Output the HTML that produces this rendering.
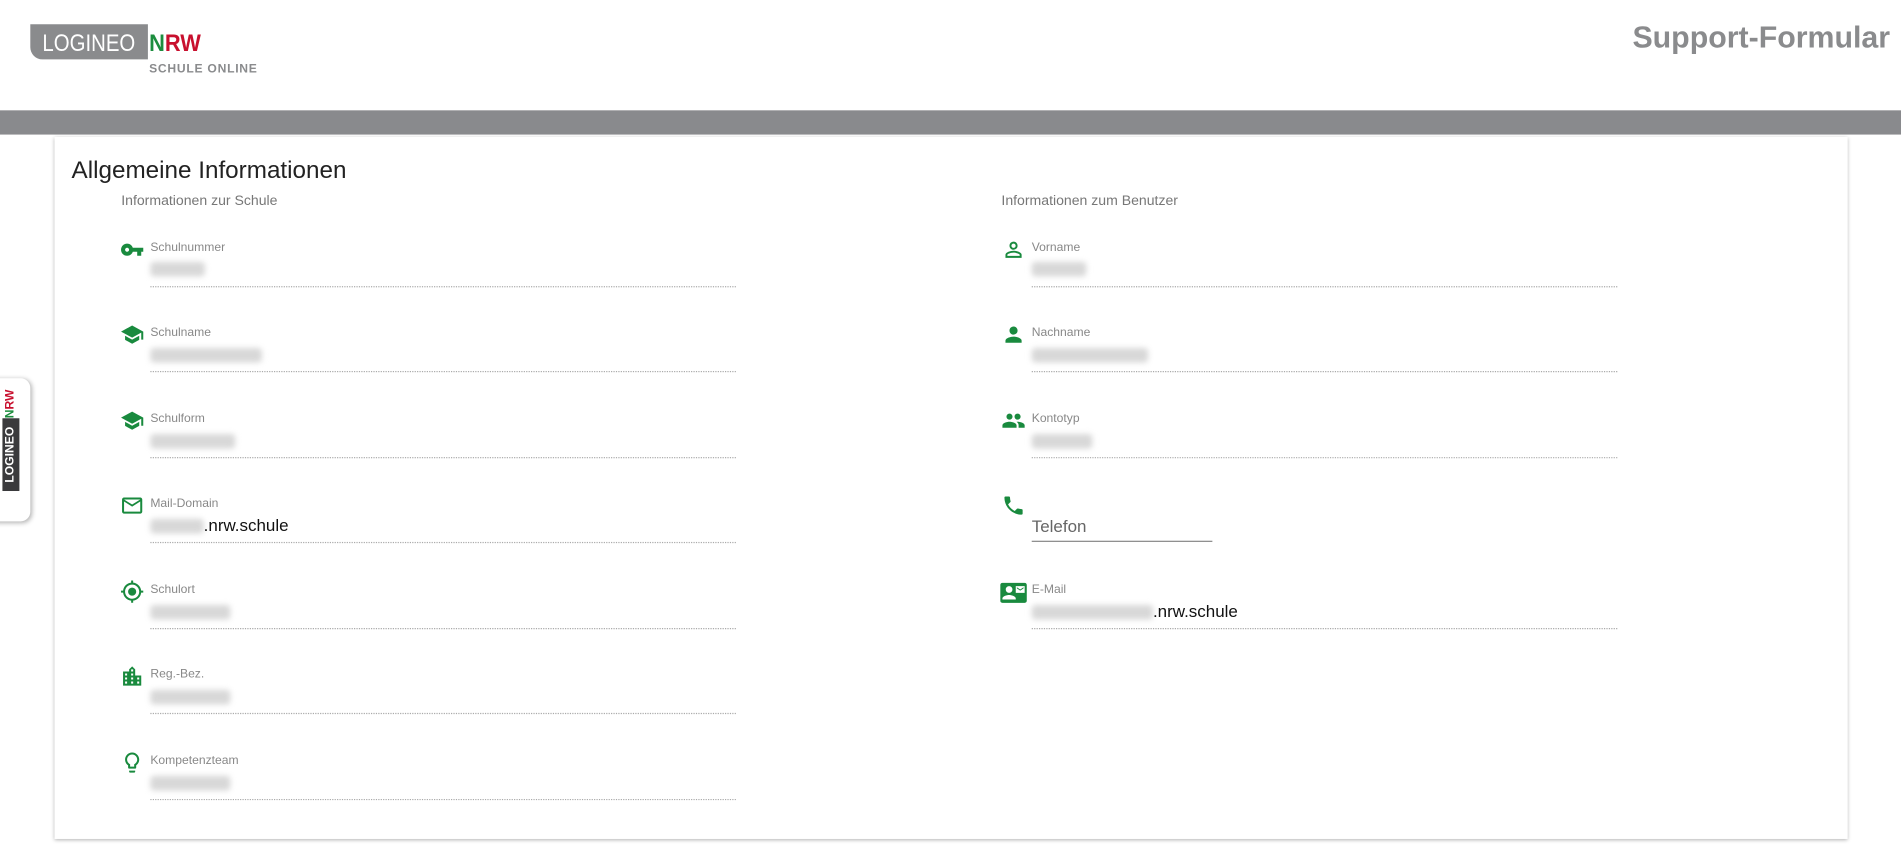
<!DOCTYPE html>
<html><head><meta charset="utf-8"><style>
*{margin:0;padding:0;box-sizing:border-box}
body{width:1901px;height:843px;background:#fff;font-family:"Liberation Sans",Arial,sans-serif;position:relative;overflow:hidden}
#w{position:absolute;left:0;top:0;width:1568px;height:696px;transform:scale(1.21237);transform-origin:0 0}
.a{position:absolute}
.lbl{font-size:10px;color:#888}
.val{filter:blur(2.5px);background:#d8d8d8;height:12px;border-radius:3px}
.line{height:0;border-top:1px dotted #aaa}
svg.i{position:absolute;width:20px;height:20px;fill:#198a3e}
</style></head><body><div id="w">
<!-- logo -->
<div class="a" style="left:25px;top:20px;width:97px;height:29px;background:#8a8b8d;border-bottom-left-radius:10px"></div>
<div class="a" style="left:35px;top:25px;font-size:20px;color:#fff;line-height:22px;transform:scaleX(.84);transform-origin:0 0">LOGINEO</div>
<div class="a" style="left:123px;top:25px;font-size:20px;font-weight:bold;line-height:22px;transform:scaleX(.9);transform-origin:0 0"><span style="color:#1c8d3e">N</span><span style="color:#c8102e">RW</span></div>
<div class="a" style="left:123px;top:52px;font-size:10px;font-weight:bold;color:#8a8b8d;letter-spacing:.6px">SCHULE ONLINE</div>
<div class="a" style="right:9px;top:17px;font-size:25px;font-weight:bold;color:#8a8b8d">Support-Formular</div>
<div class="a" style="left:0;top:91px;width:1568px;height:20px;background:#898a8d"></div>
<!-- card -->
<div class="a" style="left:45px;top:113px;width:1479px;height:579px;background:#fff;box-shadow:0 1px 3px rgba(0,0,0,.3)"></div>
<div class="a" style="left:59px;top:130px;font-size:20px;color:#222">Allgemeine Informationen</div>
<div class="a" style="left:100px;top:159px;font-size:11.6px;color:#777">Informationen zur Schule</div>
<div class="a" style="left:826px;top:159px;font-size:11.6px;color:#777">Informationen zum Benutzer</div>
<!-- side tab -->
<div class="a" style="left:-5px;top:312px;width:30px;height:118px;background:#fff;border-radius:0 8px 8px 0;box-shadow:1px 1px 4px rgba(0,0,0,.3)"></div>
<div class="a" style="left:2px;top:345px;width:14px;height:60px;background:#3a3a3c"></div>
<div class="a" style="left:3px;top:405px;transform-origin:0 0;transform:rotate(-90deg);font-size:10px;font-weight:bold;line-height:12px;white-space:nowrap;width:80px"><span style="color:#fff;display:inline-block;width:60px;text-align:center">LOGINEO</span><span style="color:#1c8d3e">N</span><span style="color:#c8102e">RW</span></div>

<!-- left column -->
<svg class="i" style="left:99px;top:196px" viewBox="0 0 24 24"><path d="M12.65 10C11.83 7.67 9.61 6 7 6c-3.31 0-6 2.69-6 6s2.69 6 6 6c2.61 0 4.83-1.67 5.65-4H17v4h4v-4h2v-4H12.65zM7 14c-1.1 0-2-.9-2-2s.9-2 2-2 2 .9 2 2-.9 2-2 2z"/></svg>
<div class="a lbl" style="left:124px;top:199px">Schulnummer</div>
<div class="a val" style="left:124px;top:216px;width:45px"></div>
<div class="a line" style="left:124px;top:236px;width:483px"></div>

<svg class="i" style="left:99px;top:266px" viewBox="0 0 24 24"><path d="M5 13.18v4L12 21l7-3.82v-4L12 17l-7-3.82zM12 3L1 9l11 6 9-4.91V17h2V9L12 3z"/></svg>
<div class="a lbl" style="left:124px;top:269px">Schulname</div>
<div class="a val" style="left:124px;top:287px;width:92px"></div>
<div class="a line" style="left:124px;top:306px;width:483px"></div>

<svg class="i" style="left:99px;top:337px" viewBox="0 0 24 24"><path d="M5 13.18v4L12 21l7-3.82v-4L12 17l-7-3.82zM12 3L1 9l11 6 9-4.91V17h2V9L12 3z"/></svg>
<div class="a lbl" style="left:124px;top:340px">Schulform</div>
<div class="a val" style="left:124px;top:358px;width:70px"></div>
<div class="a line" style="left:124px;top:377px;width:483px"></div>

<svg class="i" style="left:99px;top:407px" viewBox="0 0 24 24"><path d="M20 4H4c-1.1 0-2 .9-2 2v12c0 1.1.9 2 2 2h16c1.1 0 2-.9 2-2V6c0-1.1-.9-2-2-2zm0 14H4V8l8 5 8-5v10zm-8-7L4 6h16l-8 5z"/></svg>
<div class="a lbl" style="left:124px;top:410px">Mail-Domain</div>
<div class="a val" style="left:124px;top:428px;width:44px"></div>
<div class="a" style="left:168px;top:425px;font-size:14px;color:#111">.nrw.schule</div>
<div class="a line" style="left:124px;top:447px;width:483px"></div>

<svg class="i" style="left:99px;top:478px" viewBox="0 0 24 24"><path d="M12 8c-2.21 0-4 1.79-4 4s1.79 4 4 4 4-1.79 4-4-1.79-4-4-4zm8.94 3c-.46-4.17-3.77-7.48-7.94-7.94V1h-2v2.06C6.83 3.52 3.52 6.83 3.06 11H1v2h2.06c.46 4.17 3.77 7.48 7.94 7.94V23h2v-2.06c4.17-.46 7.48-3.77 7.94-7.94H23v-2h-2.06zM12 19c-3.87 0-7-3.13-7-7s3.13-7 7-7 7 3.13 7 7-3.13 7-7 7z"/></svg>
<div class="a lbl" style="left:124px;top:481px">Schulort</div>
<div class="a val" style="left:124px;top:499px;width:66px"></div>
<div class="a line" style="left:124px;top:518px;width:483px"></div>

<svg class="i" style="left:99px;top:548px" viewBox="0 0 24 24"><path d="M15 11V5l-3-3-3 3v2H3v14h18V11h-6zm-8 8H5v-2h2v2zm0-4H5v-2h2v2zm0-4H5V9h2v2zm6 8h-2v-2h2v2zm0-4h-2v-2h2v2zm0-4h-2V9h2v2zm0-4h-2V5h2v2zm6 12h-2v-2h2v2zm0-4h-2v-2h2v2z"/></svg>
<div class="a lbl" style="left:124px;top:551px">Reg.-Bez.</div>
<div class="a val" style="left:124px;top:569px;width:66px"></div>
<div class="a line" style="left:124px;top:588px;width:483px"></div>

<svg class="i" style="left:99px;top:619px" viewBox="0 0 24 24"><path d="M9 21c0 .55.45 1 1 1h4c.55 0 1-.45 1-1v-1H9v1zm3-19C8.14 2 5 5.14 5 9c0 2.38 1.19 4.47 3 5.74V17c0 .55.45 1 1 1h6c.55 0 1-.45 1-1v-2.26c1.81-1.27 3-3.36 3-5.74 0-3.86-3.14-7-7-7zm2.85 11.1l-.85.6V16h-4v-2.3l-.85-.6C7.8 12.16 7 10.63 7 9c0-2.76 2.24-5 5-5s5 2.24 5 5c0 1.63-.8 3.16-2.15 4.1z"/></svg>
<div class="a lbl" style="left:124px;top:622px">Kompetenzteam</div>
<div class="a val" style="left:124px;top:640px;width:66px"></div>
<div class="a line" style="left:124px;top:659px;width:483px"></div>

<!-- right column -->
<svg class="i" style="left:826px;top:196px" viewBox="0 0 24 24"><path d="M12 5.9c1.16 0 2.1.94 2.1 2.1s-.94 2.1-2.1 2.1S9.9 9.16 9.9 8s.94-2.1 2.1-2.1m0 9c2.97 0 6.1 1.46 6.1 2.1v1.1H5.9V17c0-.64 3.13-2.1 6.1-2.1M12 4C9.79 4 8 5.79 8 8s1.79 4 4 4 4-1.79 4-4-1.79-4-4-4zm0 9c-2.67 0-8 1.34-8 4v3h16v-3c0-2.66-5.33-4-8-4z"/></svg>
<div class="a lbl" style="left:851px;top:199px">Vorname</div>
<div class="a val" style="left:851px;top:216px;width:45px"></div>
<div class="a line" style="left:851px;top:236px;width:483px"></div>

<svg class="i" style="left:826px;top:266px" viewBox="0 0 24 24"><path d="M12 12c2.21 0 4-1.79 4-4s-1.79-4-4-4-4 1.79-4 4 1.79 4 4 4zm0 2c-2.67 0-8 1.34-8 4v2h16v-2c0-2.66-5.33-4-8-4z"/></svg>
<div class="a lbl" style="left:851px;top:269px">Nachname</div>
<div class="a val" style="left:851px;top:287px;width:96px"></div>
<div class="a line" style="left:851px;top:306px;width:483px"></div>

<svg class="i" style="left:826px;top:337px" viewBox="0 0 24 24"><path d="M16 11c1.66 0 2.99-1.34 2.99-3S17.66 5 16 5c-1.66 0-3 1.34-3 3s1.34 3 3 3zm-8 0c1.66 0 2.99-1.34 2.99-3S9.66 5 8 5C6.34 5 5 6.34 5 8s1.34 3 3 3zm0 2c-2.33 0-7 1.17-7 3.5V19h14v-2.5c0-2.33-4.67-3.5-7-3.5zm8 0c-.29 0-.62.02-.97.05 1.16.84 1.97 1.97 1.97 3.45V19h6v-2.5c0-2.33-4.67-3.5-7-3.5z"/></svg>
<div class="a lbl" style="left:851px;top:340px">Kontotyp</div>
<div class="a val" style="left:851px;top:358px;width:50px"></div>
<div class="a line" style="left:851px;top:377px;width:483px"></div>

<svg class="i" style="left:826px;top:407px" viewBox="0 0 24 24"><path d="M6.62 10.79c1.44 2.83 3.76 5.14 6.59 6.59l2.2-2.2c.27-.27.67-.36 1.02-.24 1.12.37 2.33.57 3.57.57.55 0 1 .45 1 1V20c0 .55-.45 1-1 1-9.39 0-17-7.61-17-17 0-.55.45-1 1-1h3.5c.55 0 1 .45 1 1 0 1.25.2 2.45.57 3.57.11.35.03.74-.25 1.02l-2.2 2.2z"/></svg>
<div class="a" style="left:851px;top:426px;font-size:14px;color:#666">Telefon</div>
<div class="a" style="left:851px;top:446px;width:149px;height:1px;background:#888"></div>

<svg class="i" style="left:825px;top:478px;width:22px;height:22px" viewBox="0 0 24 24"><path d="M21 8V7l-3 2-3-2v1l3 2 3-2zm1-5H2C.9 3 0 3.9 0 5v14c0 1.1.9 2 2 2h20c1.1 0 1.99-.9 1.99-2L24 5c0-1.1-.9-2-2-2zM8 6c1.66 0 3 1.34 3 3s-1.34 3-3 3-3-1.34-3-3 1.34-3 3-3zm6 12H2v-1c0-2 4-3.1 6-3.1s6 1.1 6 3.1v1zm8-6h-8V6h8v6z"/></svg>
<div class="a lbl" style="left:851px;top:481px">E-Mail</div>
<div class="a val" style="left:851px;top:499px;width:100px"></div>
<div class="a" style="left:951px;top:496px;font-size:14px;color:#111">.nrw.schule</div>
<div class="a line" style="left:851px;top:518px;width:483px"></div>
</div></body></html>
